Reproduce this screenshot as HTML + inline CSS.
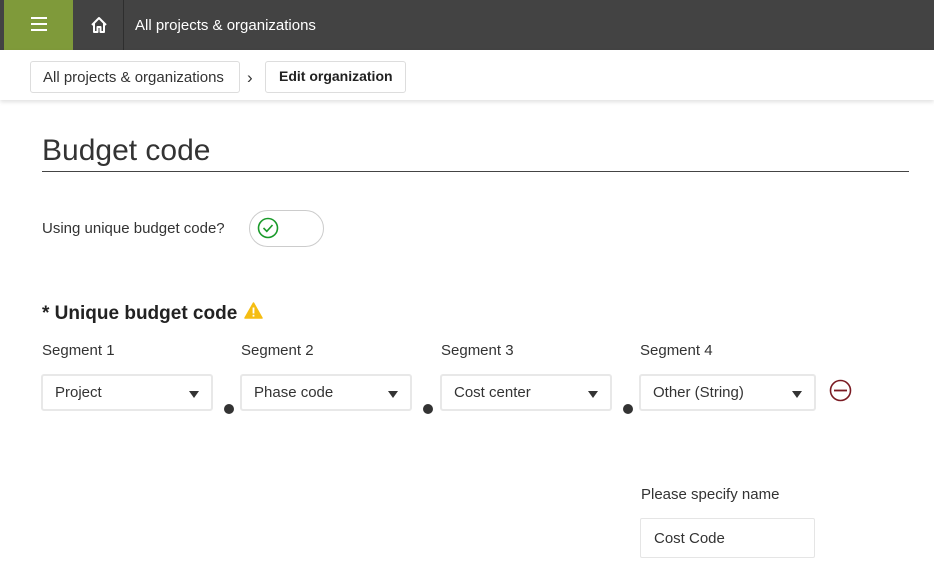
<!DOCTYPE html>
<html><head><meta charset="utf-8"><style>
*{box-sizing:border-box;margin:0;padding:0}
body{width:934px;height:574px;overflow:hidden;background:#fff;font-family:"Liberation Sans",Arial,sans-serif;color:#333;position:relative}
div{white-space:nowrap}
.top{position:absolute;left:0;top:0;width:934px;height:50px;background:#434343}
.menu{position:absolute;left:4px;top:0;width:69px;height:50px;background:#7f9a3a}
.home{position:absolute;left:73px;top:0;width:51px;height:50px;border-right:1px solid #2e2e2e}
.ttl{position:absolute;left:135px;top:17px;color:#fff;font-size:15px}
.band{position:absolute;left:0;top:50px;width:934px;height:50px;background:#fff;box-shadow:0 2px 4px rgba(0,0,0,.12)}
.bc{position:absolute;top:61px;height:32px;border:1px solid #ddd;border-radius:3px;font-size:15px;line-height:31px;padding:0 12px}
.abs{position:absolute}
.sel{position:absolute;top:374px;width:172px;height:37px;border:2px solid #e8e8e8;border-radius:3px;font-size:15px;line-height:34px;padding-left:12px;color:#333}
.sel:after{content:"";position:absolute;right:12px;top:15px;border-left:5px solid transparent;border-right:5px solid transparent;border-top:7px solid #333}
.dot{position:absolute;top:404px;width:10px;height:10px;border-radius:50%;background:#333}
.lbl{position:absolute;top:342px;font-size:15px;color:#333}
</style></head><body>
<div class="top"></div>
<div class="menu"><div class="abs" style="left:27px;top:17px;width:16px;height:2px;background:#fff;box-shadow:0 6px 0 #fff,0 12px 0 #fff"></div></div>
<div class="home"><svg class="abs" style="left:17px;top:16px" width="18" height="18" viewBox="0 0 18 18"><path d="M2 9 L9 2 L16 9 M4 7 V16 H7.5 V11 H10.5 V16 H14 V7" fill="none" stroke="#fff" stroke-width="2" stroke-linejoin="round"/></svg></div>
<div class="ttl">All projects &amp; organizations</div>
<div class="band"></div>
<div class="bc" style="left:30px;width:210px">All projects &amp; organizations</div>
<div class="abs" style="left:247px;top:68px;font-size:17px">›</div>
<div class="bc" style="left:265px;width:141px;font-weight:bold;color:#222;font-size:14px;padding:0 13px;line-height:28px">Edit organization</div>
<div class="abs" style="left:42px;top:134px;font-size:30px;color:#333">Budget code</div>
<div class="abs" style="left:42px;top:171px;width:867px;height:1px;background:#444"></div>
<div class="abs" style="left:42px;top:220px;font-size:15px">Using unique budget code?</div>
<div class="abs" style="left:249px;top:210px;width:75px;height:37px;border:1px solid #ccc;border-radius:19px"></div>
<svg class="abs" style="left:257px;top:217px" width="22" height="22" viewBox="0 0 22 22"><circle cx="11" cy="11" r="9.5" fill="none" stroke="#1a9a2a" stroke-width="1.6"/><path d="M6.5 11 L9.8 14.3 L15.5 8" fill="none" stroke="#1a9a2a" stroke-width="1.6"/></svg>
<div class="abs" style="left:42px;top:303px;font-size:19px;font-weight:bold;color:#222">* Unique budget code</div>
<svg class="abs" style="left:244px;top:302px" width="19" height="17" viewBox="0 0 19 17"><path d="M9.5 1 L18 16 H1 Z" fill="#f5bd12" stroke="#f5bd12" stroke-linejoin="round" stroke-width="1.5"/><rect x="8.6" y="5.5" width="1.8" height="6" fill="#fff"/><rect x="8.6" y="12.8" width="1.8" height="1.8" fill="#fff"/></svg>
<div class="lbl" style="left:42px">Segment 1</div>
<div class="lbl" style="left:241px">Segment 2</div>
<div class="lbl" style="left:441px">Segment 3</div>
<div class="lbl" style="left:640px">Segment 4</div>
<div class="sel" style="left:41px">Project</div>
<div class="sel" style="left:240px">Phase code</div>
<div class="sel" style="left:440px">Cost center</div>
<div class="sel" style="left:639px;width:177px">Other (String)</div>
<div class="dot" style="left:224px"></div>
<div class="dot" style="left:423px"></div>
<div class="dot" style="left:623px"></div>
<svg class="abs" style="left:829px;top:379px" width="23" height="23" viewBox="0 0 23 23"><circle cx="11.5" cy="11.5" r="10" fill="none" stroke="#7a1a22" stroke-width="1.6"/><rect x="5" y="10.6" width="13" height="1.8" fill="#7a1a22"/></svg>
<div class="abs" style="left:641px;top:486px;font-size:15px">Please specify name</div>
<div class="abs" style="left:640px;top:518px;width:175px;height:40px;border:1px solid #e5e5e5;border-radius:2px;font-size:15px;line-height:39px;padding-left:13px">Cost Code</div>
</body></html>
